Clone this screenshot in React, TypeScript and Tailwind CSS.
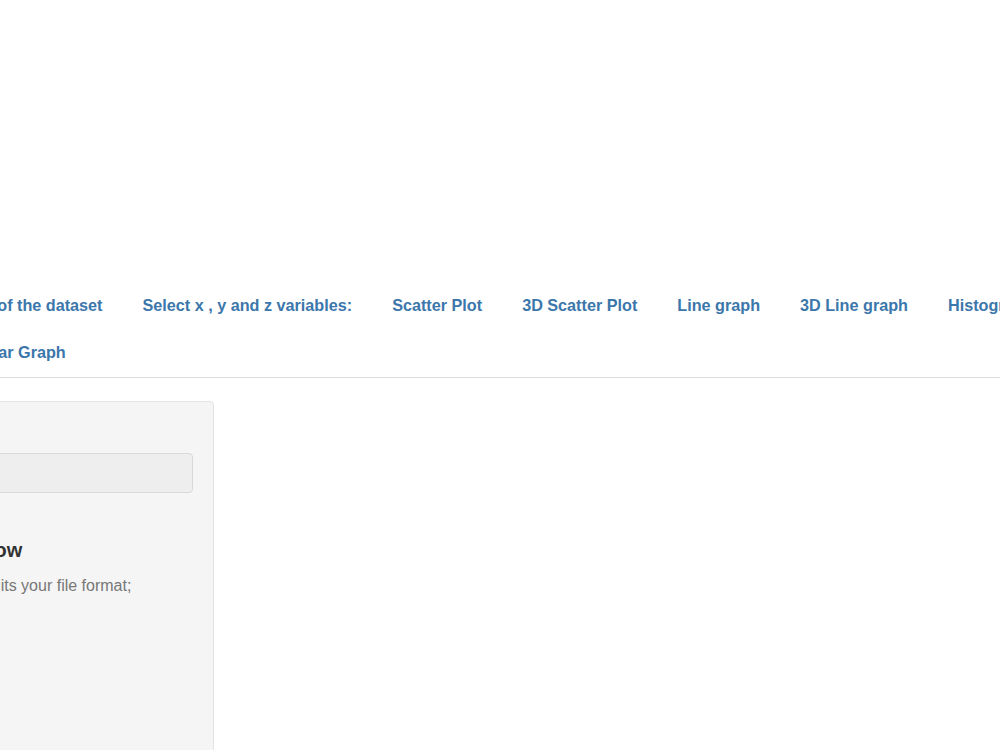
import React from "react";

const tabs = [
  "Summary of the dataset",
  "Select x , y and z variables:",
  "Scatter Plot",
  "3D Scatter Plot",
  "Line graph",
  "3D Line graph",
  "Histogram",
  "Tab",
  "Bar Graph",
];

export default function App() {
  return (
    <div
      className="h-[750px] w-[1000px] overflow-hidden bg-white"
      style={{ fontFamily: '"Liberation Sans", Arial, sans-serif' }}
    >
      <div className="pt-[281px] pb-[2px] border-b border-[#dddddd]">
        <ul className="ml-[-101px] w-[1180px] flex flex-wrap">
          {tabs.map((t) => (
            <li key={t} className="h-[47px] px-5 flex items-center">
              <a className="text-[16.2px] leading-5 font-bold text-[#3c77ab] whitespace-nowrap">
                {t}
              </a>
            </li>
          ))}
        </ul>
      </div>
      <div className="mt-[23px] ml-[-216px] w-[430px] h-[400px] bg-[#f5f5f5] border border-[#e3e3e3] rounded-[4px] p-5">
        <label className="block text-[16px] leading-[23px] font-bold text-[#333333] mb-[8px] whitespace-nowrap">
          Choose CSV File
        </label>
        <div className="h-[40px] w-full bg-[#eeeeee] border border-[#d9d9d9] rounded-[4px]" />
        <h4 className="mt-[46px] ml-[4px] text-[20px] leading-[22px] font-bold text-[#333333] whitespace-nowrap">
          Upload your file below
        </h4>
        <p className="mt-[13px] text-[16px] leading-[23px] text-[#777777] whitespace-nowrap">
          Select the separator that suits your file format;
        </p>
      </div>
    </div>
  );
}
